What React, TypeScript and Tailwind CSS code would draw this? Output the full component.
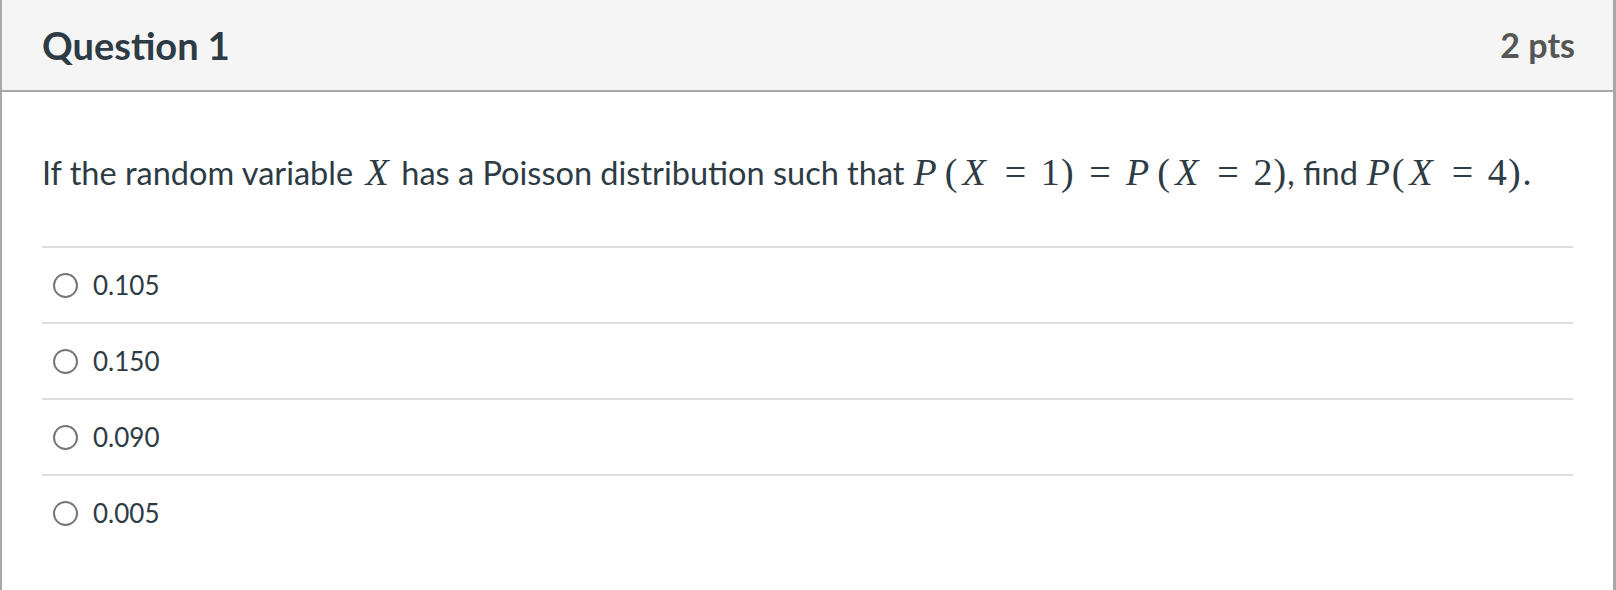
const options = ['0.105', '0.150', '0.090', '0.005'];

// Glyph boxes sized like Computer Modern so the formula keeps KaTeX's width
function G({ w, italic, children }: { w: string; italic?: boolean; children: string }) {
  return (
    <span className={`inline-block text-center ${w} ${italic ? 'italic' : ''}`}>{children}</span>
  );
}

function Eq() {
  return (
    <span className="inline-block w-[0.78em] mx-[0.28em] text-center">=</span>
  );
}

function Math({ children }: { children: React.ReactNode }) {
  return (
    <span className="font-['Liberation_Serif',serif] text-[38px] leading-none whitespace-nowrap">
      {children}
    </span>
  );
}

export default function App() {
  return (
    <div className="w-[1616px] h-[590px] overflow-hidden bg-white border-l-2 border-r-[3px] border-[#a8a8a8] font-['Lato',sans-serif] text-[#2d3b45]">
      {/* Question header */}
      <header className="h-[92px] bg-[#f5f5f5] border-b-2 border-[#a8a8a8] flex items-center justify-between pl-[40px] pr-[38px]">
        <h2 className="text-[38px] font-bold leading-none">Question 1</h2>
        <span className="text-[34px] font-bold leading-none text-[#565656]">2 pts</span>
      </header>

      <div className="px-[40px]">
        <p className="mt-[58px] mb-[51px] text-[32.5px] leading-[45px] whitespace-nowrap">
          If the random variable{' '}
          <Math>
            <G w="w-[0.83em]" italic>X</G>
          </Math>{' '}
          has a Poisson distribution such that{' '}
          <Math>
            <G w="w-[0.64em]" italic>P</G>
            <G w="w-[0.39em] ml-[0.17em]">(</G>
            <G w="w-[0.83em]" italic>X</G>
            <Eq />
            <G w="w-[0.5em]">1</G>
            <G w="w-[0.39em]">)</G>
            <Eq />
            <G w="w-[0.64em]" italic>P</G>
            <G w="w-[0.39em] ml-[0.17em]">(</G>
            <G w="w-[0.83em]" italic>X</G>
            <Eq />
            <G w="w-[0.5em]">2</G>
            <G w="w-[0.39em]">)</G>
          </Math>
          , find{' '}
          <Math>
            <G w="w-[0.64em]" italic>P</G>
            <G w="w-[0.39em]">(</G>
            <G w="w-[0.83em]" italic>X</G>
            <Eq />
            <G w="w-[0.5em]">4</G>
            <G w="w-[0.39em]">)</G>
            <G w="w-[0.28em]">.</G>
          </Math>
        </p>

        <ul>
          {options.map((opt) => (
            <li
              key={opt}
              className="h-[76px] border-t-2 border-[#dddddd] flex items-center pl-[11px]"
            >
              <span className="w-[25px] h-[25px] rounded-full border-2 border-[#767676] bg-white shrink-0" />
              <span className="ml-[15px] text-[26px] leading-none">{opt}</span>
            </li>
          ))}
        </ul>
      </div>
    </div>
  );
}
